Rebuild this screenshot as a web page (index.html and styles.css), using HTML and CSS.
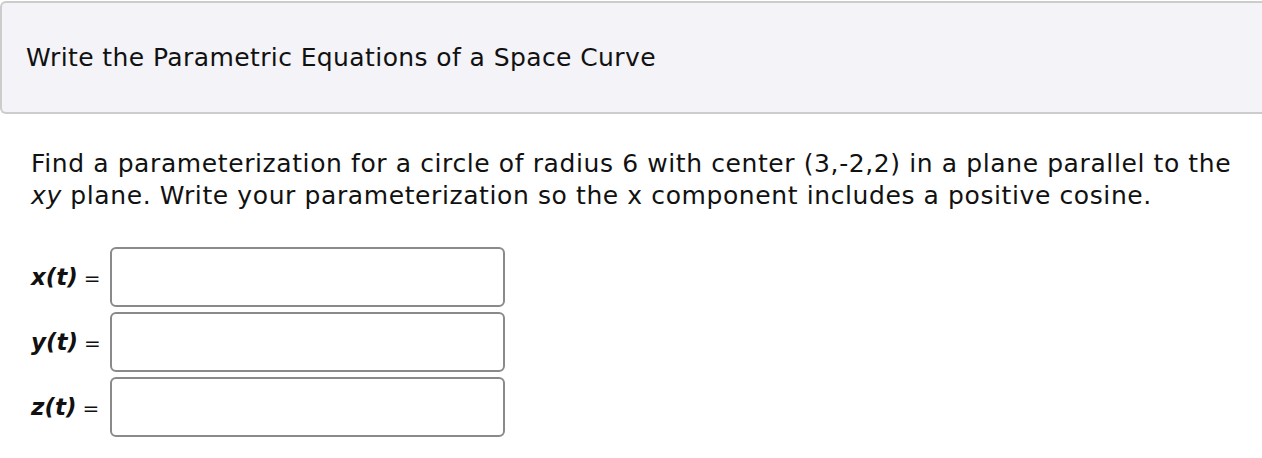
FILE: index.html
```html
<!DOCTYPE html>
<html>
<head>
<meta charset="utf-8">
<link rel="stylesheet" href="styles.css">
</head>
<body>
<div class="page">
  <div class="header">
    <h1 class="title">Write the Parametric Equations of a Space Curve</h1>
  </div>
  <div class="question">
    <p class="prompt">Find a parameterization for a circle of radius 6 with center (3,-2,2) in a plane parallel to the <i>xy</i> plane. Write your parameterization so the x component includes a positive cosine.</p>
    <div class="answers">
      <div class="row"><span class="label"><i class="var">x(t)</i><span class="eq">=</span></span><span class="box"></span></div>
      <div class="row"><span class="label"><i class="var">y(t)</i><span class="eq">=</span></span><span class="box"></span></div>
      <div class="row"><span class="label"><i class="var">z(t)</i><span class="eq">=</span></span><span class="box"></span></div>
    </div>
  </div>
</div>
</body>
</html>
```

FILE: styles.css
```css
html, body {
  margin: 0;
  padding: 0;
  background: #ffffff;
}
body {
  font-family: "DejaVu Sans", sans-serif;
  color: #111;
}
.page {
  width: 1262px;
  height: 458px;
  overflow: hidden;
  padding-top: 1px;
}
.header {
  background: #f3f3f8;
  border: 2px solid #cccccc;
  border-right: none;
  border-radius: 6px 0 0 6px;
  height: 109px;
  margin-right: -10px;
  display: flex;
  align-items: center;
  padding-left: 24px;
}
.title {
  margin: 0;
  font-size: 25px;
  letter-spacing: 0.4px;
  font-weight: normal;
}
.question {
  padding: 34px 0 0 31px;
}
.prompt {
  margin: 0;
  font-size: 25px;
  letter-spacing: 0.6px;
  line-height: 32px;
}
.answers {
  margin-top: 35px;
  display: flex;
  flex-direction: column;
  gap: 5px;
}
.row {
  display: flex;
  align-items: center;
}
.label {
  width: 79px;
  font-size: 23px;
  display: flex;
  align-items: baseline;
}
.var {
  font-weight: bold;
}
.eq {
  font-size: 20px;
  margin-left: 6px;
}
.box {
  width: 391px;
  height: 56px;
  border: 2px solid #8a8a8a;
  border-radius: 6px;
  background: #fff;
}
```
